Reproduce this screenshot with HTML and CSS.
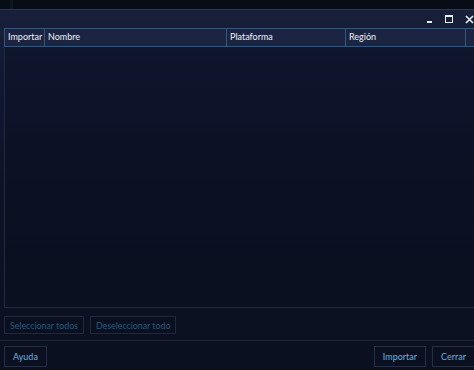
FILE: index.html
```html
<!DOCTYPE html>
<html>
<head>
<meta charset="utf-8">
<link rel="stylesheet" href="styles.css">
</head>
<body>
<div class="strip"><div class="strip-line"></div></div>
<div class="window">
  <div class="titlebar">
    <span class="ctl ctl-min"></span>
    <span class="ctl ctl-max"></span>
    <span class="ctl ctl-close">
      <svg width="9" height="9" viewBox="0 0 9 9"><path d="M1 1L8 8M8 1L1 8" stroke="#e8eef6" stroke-width="1.6"/></svg>
    </span>
  </div>
  <div class="table">
    <div class="thead">
      <div class="th c1">Importar</div>
      <div class="th c2">Nombre</div>
      <div class="th c3">Plataforma</div>
      <div class="th c4">Región</div>
      <div class="th c5"></div>
    </div>
    <div class="tbody"></div>
  </div>
  <div class="selrow">
    <button class="btn dis">Seleccionar todos</button>
    <button class="btn dis">Deseleccionar todo</button>
  </div>
  <div class="footer">
    <button class="btn act">Ayuda</button>
    <div class="spacer"></div>
    <button class="btn act">Importar</button>
    <button class="btn act">Cerrar</button>
  </div>
</div>
</body>
</html>
```
FILE: styles.css
```css
html, body {
  margin: 0;
  padding: 0;
}
body {
  width: 474px;
  height: 370px;
  overflow: hidden;
  background: #090d18;
  font-family: "Lato", "Open Sans", sans-serif;
  font-size: 9px;
  color: #e6ecf4;
}
.strip {
  height: 9px;
  background: #080c16;
}
.strip-line {
  width: 3px;
  height: 9px;
  margin-left: 10px;
  background: #0f1422;
}
.window {
  width: 479px;
  height: 360px;
  border-top: 1px solid #2c3852;
  background: linear-gradient(180deg, #18203a 0%, #111833 18%, #0d1326 50%, #0b1020 100%);
  display: flex;
  flex-direction: column;
  box-sizing: border-box;
}
.titlebar {
  height: 18px;
  display: flex;
  justify-content: flex-end;
  align-items: center;
  padding-right: 0;
}
.ctl {
  width: 20px;
  height: 18px;
  display: flex;
  align-items: center;
  justify-content: center;
}
.ctl-min::before {
  content: "";
  width: 5px;
  height: 2px;
  background: #e8eef6;
  margin-top: 6px;
}
.ctl-max::before {
  content: "";
  width: 6px;
  height: 5px;
  border: 1.5px solid #e8eef6;
  border-top-width: 2px;
}
.table {
  margin: 0 4px;
  height: 279px;
  border: 1px solid #1f2a40;
  border-top: none;
  display: flex;
  flex-direction: column;
}
.thead {
  display: flex;
  height: 17px;
  background: #1b2442;
  border: 1px solid #33567a;
  margin: 0 -1px;
}
.th {
  box-sizing: border-box;
  padding-left: 3px;
  line-height: 15px;
  border-right: 1px solid #33567a;
  color: #eef2f8;
  white-space: nowrap;
}
.c1 { width: 40px; }
.c2 { width: 182px; }
.c3 { width: 119px; }
.c4 { width: 120px; }
.c5 { flex: 1; border-right: none; }
.tbody {
  flex: 1;
  background: rgba(10, 14, 30, 0.35);
}
.selrow {
  display: flex;
  gap: 6px;
  padding: 8px 4px 0;
  height: 18px;
}
.btn {
  font-family: inherit;
  font-size: 8.8px;
  background: #0b1020;
  border: 1px solid #1e2940;
  padding: 0 5px;
  margin: 0;
  cursor: default;
}
.btn.dis {
  color: #2c5878;
  height: 18px;
}
.footer {
  margin-top: 6px;
  border-top: 1px solid #1c2438;
  padding: 5px 4px 0;
  display: flex;
  gap: 6px;
}
.btn.act {
  font-size: 9px;
  color: #5cb6e6;
  height: 21px;
  padding: 0 8px;
  border-color: #232e46;
}
.spacer { flex: 1; }
```
